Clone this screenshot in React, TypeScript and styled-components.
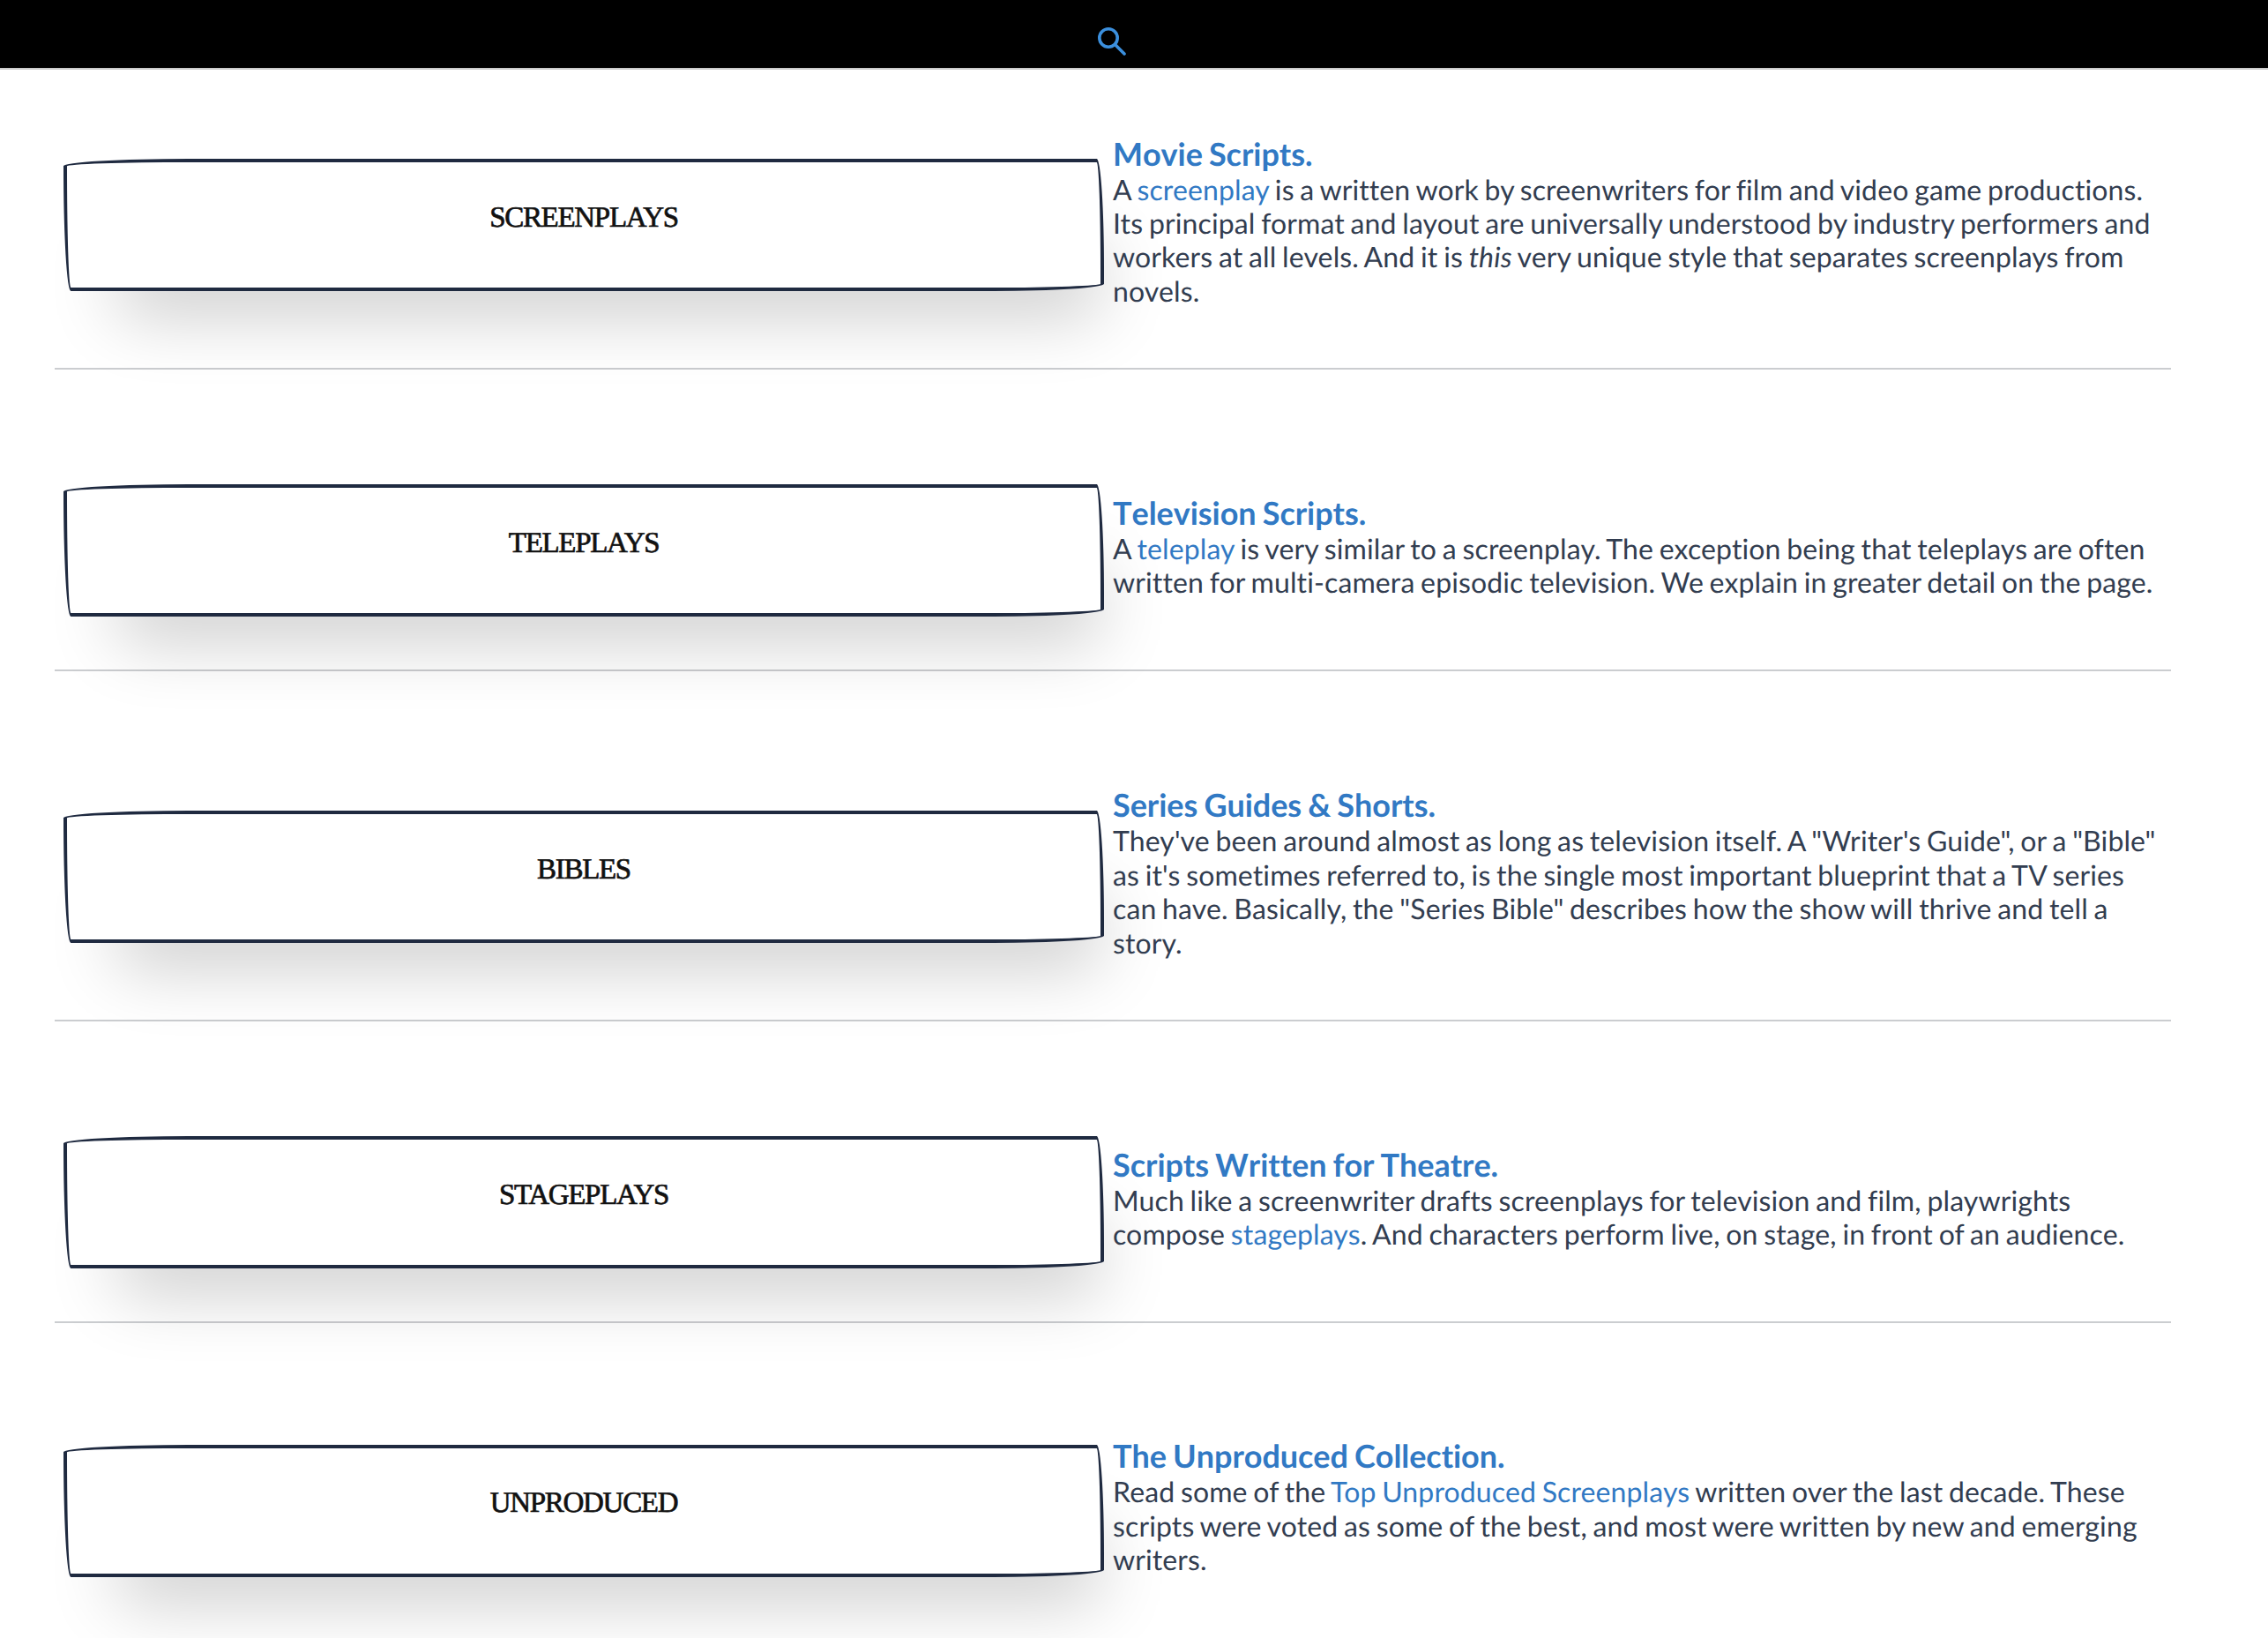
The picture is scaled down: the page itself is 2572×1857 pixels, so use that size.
import React from "react";
import styled, { createGlobalStyle } from "styled-components";

const Global = createGlobalStyle`
  html, body { margin: 0; padding: 0; background: #fff; }
  body {
    font-family: Lato, "Open Sans", sans-serif;
    color: #323d50;
    text-rendering: geometricPrecision;
  }
`;

const TopBar = styled.header`
  height: 77px;
  background: #000;
  border-bottom: 2px solid #ccc;
  display: flex;
  justify-content: center;
  align-items: flex-start;
`;

const SearchIcon = styled.svg`
  width: 36px;
  height: 36px;
  margin-top: 28px;
  margin-left: -52px;
  fill: none;
  stroke: #3b8fdd;
  stroke-width: 3.6;
  stroke-linecap: round;
`;

const List = styled.main`
  padding: 0 110px 0 62px;
`;

const Row = styled.section<{ $top: number; $bottom: number; $rule?: boolean }>`
  display: flex;
  align-items: center;
  padding: ${(p) => p.$top}px 0 ${(p) => p.$bottom}px;
  border-bottom: ${(p) => (p.$rule ? "2px solid #cbcdd0" : "none")};
`;

const BoxColumn = styled.div`
  flex: 0 0 50%;
  padding: 8.8px 10px 0;
  box-sizing: border-box;
`;

const SketchBox = styled.a`
  display: flex;
  justify-content: center;
  align-items: center;
  box-sizing: border-box;
  height: 150px;
  padding-bottom: 16px;
  background: #fff;
  border: 4px solid #1f2a40;
  border-radius: 255px 15px 225px 15px / 15px 225px 15px 255px;
  box-shadow: 28px 62px 80px -34px hsla(0, 0%, 0%, 0.2);
  font-family: "Liberation Serif", "Times New Roman", serif;
  font-size: 33px;
  letter-spacing: -1.3px;
  -webkit-text-stroke: 0.7px #111;
  color: #111;
`;

const TextColumn = styled.div`
  flex: 0 0 50%;
  font-size: 32px;
  line-height: 38.4px;
  letter-spacing: 0.12px;
  word-spacing: -1.6px;
`;

const Title = styled.h2`
  margin: 0;
  font-size: 36px;
  line-height: 43px;
  font-weight: 700;
  font-kerning: none;
  letter-spacing: -0.05px;
  word-spacing: -1.6px;
  color: #3179c4;
`;

const Body = styled.p`
  margin: 0;
`;

const TextLink = styled.a`
  color: #3179c4;
`;

export default function App() {
  return (
    <>
      <Global />
      <TopBar>
        <SearchIcon viewBox="0 0 36 36">
          <circle cx="15" cy="15" r="10.2" />
          <line x1="22.5" y1="22.5" x2="33" y2="33" />
        </SearchIcon>
      </TopBar>
      <List>
        <Row $top={73.6} $bottom={67.8} $rule>
          <BoxColumn><SketchBox>SCREENPLAYS</SketchBox></BoxColumn>
          <TextColumn>
            <Title>Movie Scripts.</Title>
            <Body>
              A <TextLink>screenplay</TextLink> is a written work by screenwriters for film and video game productions. Its principal format and layout are universally understood by industry performers and workers at all levels. And it is <em>this</em> very unique style that separates screenplays from novels.
            </Body>
          </TextColumn>
        </Row>
        <Row $top={121.2} $bottom={60} $rule>
          <BoxColumn><SketchBox>TELEPLAYS</SketchBox></BoxColumn>
          <TextColumn>
            <Title>Television Scripts.</Title>
            <Body>
              A <TextLink>teleplay</TextLink> is very similar to a screenplay. The exception being that teleplays are often written for multi-camera episodic television. We explain in greater detail on the page.
            </Body>
          </TextColumn>
        </Row>
        <Row $top={130.3} $bottom={68.1} $rule>
          <BoxColumn><SketchBox>BIBLES</SketchBox></BoxColumn>
          <TextColumn>
            <Title>Series Guides &amp; Shorts.</Title>
            <Body>
              They've been around almost as long as television itself. A "Writer's Guide", or a "Bible" as it's sometimes referred to, is the single most important blueprint that a TV series can have. Basically, the "Series Bible" describes how the show will thrive and tell a story.
            </Body>
          </TextColumn>
        </Row>
        <Row $top={121.2} $bottom={60} $rule>
          <BoxColumn><SketchBox>STAGEPLAYS</SketchBox></BoxColumn>
          <TextColumn>
            <Title>Scripts Written for Theatre.</Title>
            <Body>
              Much like a screenwriter drafts screenplays for television and film, playwrights compose <TextLink>stageplays</TextLink>. And characters perform live, on stage, in front of an audience.
            </Body>
          </TextColumn>
        </Row>
        <Row $top={129.2} $bottom={69}>
          <BoxColumn><SketchBox>UNPRODUCED</SketchBox></BoxColumn>
          <TextColumn>
            <Title>The Unproduced Collection.</Title>
            <Body>
              Read some of the <TextLink>Top Unproduced Screenplays</TextLink> written over the last decade. These scripts were voted as some of the best, and most were written by new and emerging writers.
            </Body>
          </TextColumn>
        </Row>
      </List>
    </>
  );
}
